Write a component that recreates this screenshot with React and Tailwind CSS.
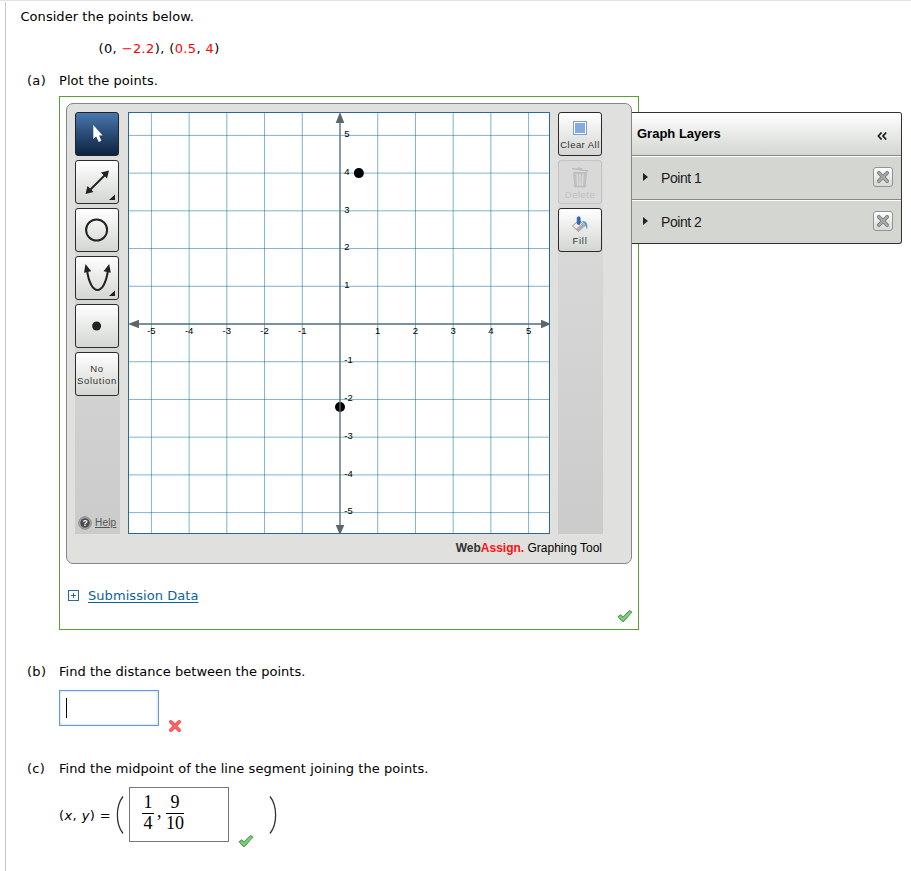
import React from 'react';

const UNIT = 37.72;
const CENTER = 212;
const ticks = [-5, -4, -3, -2, -1, 1, 2, 3, 4, 5];

const points = [
  { x: 0, y: -2.2 },
  { x: 0.5, y: 4 },
];

const layers = ['Point 1', 'Point 2'];

function ToolButton({ children, active, disabled }) {
  const look = active
    ? 'border-[#222] bg-linear-to-b from-[#4a78b0] to-[#0d2340]'
    : disabled
      ? 'border-[#c3c3c3] bg-[#d9d9d9]'
      : 'border-[#2b2b2b] bg-linear-to-b from-white to-[#d3d6d1]';
  return (
    <button className={`flex h-11 w-11 shrink-0 flex-col items-center justify-center rounded-[3px] border ${look}`}>
      {children}
    </button>
  );
}

function CheckMark() {
  return (
    <svg width="16" height="14" viewBox="0 0 16 14" className="block">
      <path d="M1 7.7 L3.6 5.7 L6 7.9 L12.4 1.5 L15 3.1 L6.6 12.5 L5.2 12.5 Z" fill="#67bd67" stroke="#4c9a50" strokeWidth="1" strokeLinejoin="round" />
      <path d="M2.8 7.7 L6 10.3 L13.2 3.1" fill="none" stroke="#84cf80" strokeWidth="1.6" />
    </svg>
  );
}

function Graph() {
  return (
    <svg width="422" height="422" viewBox="0 0 422 422" className="block shrink-0 bg-white">
      {/* Grid */}
      {ticks.map((t) => (
        <g key={t} stroke="#0e6e93" strokeOpacity="0.52" strokeWidth="1">
          <line x1={CENTER + t * UNIT} x2={CENTER + t * UNIT} y1="0" y2="422" />
          <line x1="0" x2="422" y1={CENTER - t * UNIT} y2={CENTER - t * UNIT} />
        </g>
      ))}

      {/* Points */}
      {points.map((p, i) => (
        <circle key={i} cx={CENTER + p.x * UNIT} cy={CENTER - p.y * UNIT} r="5" fill="#000" />
      ))}

      {/* Axes */}
      <g stroke="#4e6c7a" strokeOpacity="0.75" strokeWidth="1.8">
        <line x1="10" x2="414" y1="212" y2="212" />
        <line x1="212" x2="212" y1="10" y2="414" />
      </g>
      <g fill="#59676d">
        <path d="M0 212 L11 207.7 V216.3 Z" />
        <path d="M423 212 L413 207.7 V216.3 Z" />
        <path d="M212 0 L207.7 11 H216.3 Z" />
        <path d="M212 423 L207.7 413 H216.3 Z" />
      </g>

      {/* Labels */}
      <g fontFamily="Liberation Sans, Arial, sans-serif" fontSize="9.5" fill="#000">
        {ticks.map((t) => (
          <text key={`x${t}`} x={CENTER + t * UNIT} y="222" textAnchor="middle">{t}</text>
        ))}
        {ticks.map((t) => (
          <text key={`y${t}`} x="216.3" y={CENTER - t * UNIT + 1.7}>{t}</text>
        ))}
      </g>
      <rect x="0.5" y="0.5" width="421" height="421" fill="none" stroke="#2b669c" />
    </svg>
  );
}

function LeftTools() {
  return (
    <div className="flex h-[422px] w-[45px] flex-col gap-1 bg-linear-to-b from-[#dedede] to-[#cbcbcb]">
      <ToolButton active>
        <svg width="42" height="42" viewBox="0 0 42 42">
          <path d="M17.3 12 V26 L20.2 23.6 L22.8 29 L25.4 27.8 L23 22.6 H26.6 Z" fill="#fff" />
        </svg>
      </ToolButton>
      <ToolButton>
        <svg width="42" height="42" viewBox="0 0 42 42" fill="#222">
          <path d="M13 30 L30 13" stroke="#222" strokeWidth="2" />
          <path d="M33 9.5 L31 17.5 L25 11.5 Z M9.5 33 L11.5 25 L17.5 31 Z" />
          <path d="M39 33.5 V39 H33 Z" />
        </svg>
      </ToolButton>
      <ToolButton>
        <svg width="42" height="42" viewBox="0 0 42 42">
          <circle cx="20.6" cy="21" r="10.5" fill="none" stroke="#222" strokeWidth="2" />
        </svg>
      </ToolButton>
      <ToolButton>
        <svg width="42" height="42" viewBox="0 0 42 42" fill="#222">
          <path d="M11 13 C14.5 39.5 28.5 39.5 32 13" fill="none" stroke="#222" strokeWidth="2" />
          <path d="M9.5 7 L8 15.8 L15.2 14.2 Z M33.2 7 L27.6 14.2 L34.8 15.8 Z" />
          <path d="M39 33.5 V39 H33 Z" />
        </svg>
      </ToolButton>
      <ToolButton>
        <svg width="42" height="42" viewBox="0 0 42 42">
          <circle cx="20.6" cy="21" r="4.5" fill="#222" />
        </svg>
      </ToolButton>
      <ToolButton>
        <span className="pt-px text-center font-['Liberation_Sans',Arial,sans-serif] text-[9.5px] leading-3 tracking-[0.7px] text-[#333]">
          No<br />Solution
        </span>
      </ToolButton>
      <div className="mt-auto flex items-center gap-[3px] pb-1 pl-[3px]">
        <svg width="14" height="14" viewBox="0 0 14 14">
          <circle cx="7" cy="7" r="6.2" fill="#b5b5b5" stroke="#808080" />
          <circle cx="7" cy="7" r="4.8" fill="#4c4c4c" />
          <text x="7" y="10" textAnchor="middle" fontSize="8.5" fontWeight="bold" fontFamily="Liberation Sans, Arial, sans-serif" fill="#fff">?</text>
        </svg>
        <a className="font-['Liberation_Sans',Arial,sans-serif] text-[10px] leading-[15px] tracking-[0.2px] text-[#555] underline">Help</a>
      </div>
    </div>
  );
}

function RightTools() {
  return (
    <div className="flex h-[422px] w-[45px] flex-col gap-1 bg-linear-to-b from-[#dedede] to-[#cbcbcb] font-['Liberation_Sans',Arial,sans-serif] text-[9.5px] leading-3 tracking-[0.7px] text-[#333]">
      <ToolButton>
        <svg width="14" height="14" viewBox="0 0 14 14" className="mt-[3px]">
          <rect x="0.5" y="0.5" width="13" height="13" fill="#fff" stroke="#7d9fd0" />
          <rect x="2" y="2" width="10" height="10" fill="#86a9e0" />
        </svg>
        <span className="mt-1 whitespace-nowrap tracking-[0.45px]">Clear All</span>
      </ToolButton>
      <ToolButton disabled>
        <svg width="18" height="21" viewBox="0 0 18 21" className="mt-[3px]" fill="none" stroke="#bdbdbd">
          <path d="M1 1.5 L17 4 M7 1 L11 2" strokeWidth="1.6" />
          <path d="M2.5 5.5 H15.5 L14 20 H4 Z" fill="#c2c2c2" />
          <path d="M6 7 L6.8 18.5 M9 7 V18.5 M12 7 L11.2 18.5" stroke="#dedede" strokeWidth="1.2" />
        </svg>
        <span className="mt-px tracking-[0.5px] text-[#c1c1c1]">Delete</span>
      </ToolButton>
      <ToolButton>
        <svg width="18" height="17" viewBox="0 0 18 17" className="mt-0.5">
          <path d="M1.5 10 L8 4 L14 9.5 L7.5 15.5 Z" fill="#f0f0f0" stroke="#777" strokeWidth="0.8" />
          <path d="M5 12.8 L11.5 7 L14 9.5 L7.5 15.5 Z" fill="#b0b0b0" />
          <path d="M10.5 5 C15.5 4.5 17.5 8 16 13.5 C14.5 10 14 8 10.5 5 Z" fill="#5f9dcc" />
          <rect x="6.2" y="0.8" width="3" height="7.7" rx="1.3" fill="#2f6fbd" stroke="#1c4d91" strokeWidth="0.6" />
        </svg>
        <span className="mt-0.5">Fill</span>
      </ToolButton>
    </div>
  );
}

function GraphLayers() {
  return (
    <div className="mt-[9px] h-[132px] w-[270px] shrink-0 overflow-hidden rounded-r-[3px] border border-l-0 border-[#2f3133] bg-[#d3d6d1] font-['Liberation_Sans',Arial,sans-serif] text-black">
      <div className="flex h-[42px] items-center justify-between bg-linear-to-b from-white to-[#d3d6d1] pr-[14px] pl-[5px]">
        <span className="text-[13px] font-bold">Graph Layers</span>
        <svg width="10" height="8" viewBox="0 0 10 8" className="mt-[3px]" fill="none" stroke="#222" strokeWidth="1.8">
          <path d="M4.6 0.5 L1.4 4 L4.6 7.5 M9.2 0.5 L6 4 L9.2 7.5" />
        </svg>
      </div>
      {layers.map((name) => (
        <div key={name} className="flex h-11 items-center border-t border-[#858885] pr-2 pb-0.5 pl-[11px] shadow-[inset_0_1px_0_#fff]">
          <svg width="5" height="8" viewBox="0 0 5 8">
            <path d="M0 0 L5 4 L0 8 Z" fill="#222" />
          </svg>
          <span className="ml-[13px] flex-1 pt-0.5 text-[14px] leading-5 tracking-[-0.45px] text-[#1a1a1a]">{name}</span>
          <button className="flex h-5 w-5 items-center justify-center rounded-[3px] border border-[#929492] bg-linear-to-b from-white to-[#d8d8d8]">
            <svg width="14" height="14" viewBox="0 0 14 14" fill="none" strokeLinecap="round">
              <path d="M2.8 2.8 L11.2 11.2 M11.2 2.8 L2.8 11.2" stroke="#808080" strokeWidth="3.8" />
              <path d="M2.8 2.8 L11.2 11.2 M11.2 2.8 L2.8 11.2" stroke="#a6a6a6" strokeWidth="2.2" />
            </svg>
          </button>
        </div>
      ))}
    </div>
  );
}

function GraphingTool() {
  return (
    <div className="h-[534px] w-[580px] border border-[#5c9e35] pt-1.5 pl-1.5">
      <div className="flex h-[461px] items-start">
        <div className="h-[461px] w-[566px] shrink-0 rounded-[7px] border border-[#868686] bg-[#e0e0de] pt-2 pl-2">
          <div className="flex gap-2">
            <LeftTools />
            <Graph />
            <RightTools />
          </div>
          <p className="mt-[5px] mr-[29px] text-right font-['Liberation_Sans',Arial,sans-serif] text-xs leading-[18px] text-black">
            <span className="font-bold text-[#333]">Web<span className="text-[#f11]">Assign.</span></span> Graphing Tool
          </p>
        </div>
        <GraphLayers />
      </div>
      <div className="mt-[22px] flex h-5 items-center pl-[2px]">
        <svg width="11" height="11" viewBox="0 0 11 11" className="mb-px">
          <rect x="0.5" y="0.5" width="10" height="10" fill="#fff" stroke="#2c6a9e" />
          <path d="M3 5.5 H8 M5.5 3 V8" stroke="#2c6a9e" />
        </svg>
        <a className="ml-[9px] tracking-[0.06px] text-[#0b62a0] underline underline-offset-2">Submission Data</a>
      </div>
      <div className="mt-[3px] flex justify-end pr-[5px]">
        <CheckMark />
      </div>
    </div>
  );
}

function Fraction({ top, bottom, width }) {
  return (
    <span className={`flex flex-col items-center ${width}`}>
      <span className="h-[18px] leading-[15px]">{top}</span>
      <span className="h-px w-full bg-black" />
      <span className="h-[18px] leading-[19px]">{bottom}</span>
    </span>
  );
}

export default function App() {
  return (
    <div className="h-[871px] w-[911px] overflow-hidden border-t border-[#e2e2e2] bg-white pt-px font-['Verdana','DejaVu_Sans',sans-serif] text-[13px] leading-5 text-black">
      <main className="ml-[5px] h-full border-l border-[#c8c8c8]">
        <p className="pt-[5px] pl-[14.5px] tracking-[0.04px]">Consider the points below.</p>
        <p className="mt-3 pl-[92.5px] tracking-[0.38px]">
          (0, <span className="text-[#f00]">−2.2</span>), (<span className="text-[#f00]">0.5</span>, <span className="text-[#f00]">4</span>)
        </p>

        {/* Part a */}
        <div className="mt-3 flex tracking-[0.05px]">
          <span className="w-[53px] pl-[21px] tracking-[0.3px]">(a)</span>
          <p>Plot the points.</p>
        </div>
        <div className="mt-[5px] ml-[53px]">
          <GraphingTool />
        </div>

        {/* Part b */}
        <div className="mt-8 flex tracking-[0.03px]">
          <span className="w-[53px] pl-[21px] tracking-[0.3px]">(b)</span>
          <p>Find the distance between the points.</p>
        </div>
        <div className="mt-2 ml-[53px] flex">
          <div className="flex h-9 w-[100px] items-center border border-[#6799c9] pl-1.5 shadow-[inset_0_0_3px_#a9d0f0]">
            <span className="h-5 w-px bg-black" />
          </div>
          <svg width="14" height="14" viewBox="0 0 14 14" className="mt-[29px] ml-[9px]" fill="none" strokeLinecap="round">
            <path d="M2.8 2.8 L11.2 11.2 M11.2 2.8 L2.8 11.2" stroke="#ec4a4e" strokeWidth="3.6" />
            <path d="M2.8 2.8 L11.2 11.2 M11.2 2.8 L2.8 11.2" stroke="#ff6467" strokeWidth="2.2" />
          </svg>
        </div>

        {/* Part c */}
        <div className="mt-[26px] flex tracking-[0.06px]">
          <span className="w-[53px] pl-[21px] tracking-[0.3px]">(c)</span>
          <p>Find the midpoint of the line segment joining the points.</p>
        </div>
        <div className="mt-2 ml-[53px] flex">
          <span className="mt-[19px] w-[57px] tracking-[0.4px] whitespace-nowrap">(<i>x</i>, <i>y</i>) =</span>
          <svg width="8" height="38" viewBox="0 0 8 38" className="mt-[9px]">
            <path d="M7 0.5 C-0.5 10 -0.5 28 7 37.5" fill="none" stroke="#333" strokeWidth="1.3" />
          </svg>
          <div className="ml-[5px] flex h-[55px] w-[100px] items-start border border-[#777] pt-[7px] pl-3 font-['Liberation_Serif',serif] text-[18px]">
            <Fraction top="1" bottom="4" width="w-3" />
            <span className="w-3 pt-[6px] pl-[3px] leading-5">,</span>
            <Fraction top="9" bottom="10" width="w-[18px]" />
          </div>
          <div className="mt-[47px] ml-[9px]">
            <CheckMark />
          </div>
          <svg width="8" height="38" viewBox="0 0 8 38" className="mt-[9px] ml-[15px]">
            <path d="M1 0.5 C8.5 10 8.5 28 1 37.5" fill="none" stroke="#333" strokeWidth="1.3" />
          </svg>
        </div>
      </main>
    </div>
  );
}
